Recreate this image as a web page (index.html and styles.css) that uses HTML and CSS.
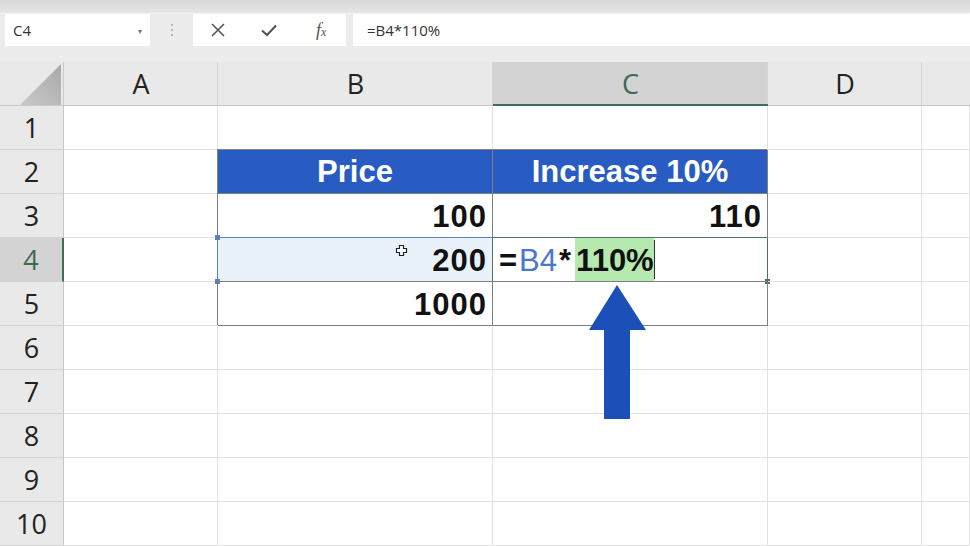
FILE: index.html
```html
<!DOCTYPE html>
<html>
<head>
<meta charset="utf-8">
<link rel="stylesheet" href="styles.css">
</head>
<body>
<div class="top">
  <div class="namebox"><span>C4</span><span class="dd">&#9662;</span></div>
  <div class="sep"><i></i><i></i><i></i></div>
  <div class="fxbox">
    <svg class="ico" width="16" height="16" viewBox="0 0 16 16"><path d="M2 2 L14 14 M14 2 L2 14" stroke="#555" stroke-width="1.6" fill="none"/></svg>
    <svg class="ico" width="18" height="16" viewBox="0 0 18 16"><path d="M2 8.5 L7 13 L16 3.5" stroke="#555" stroke-width="2" fill="none"/></svg>
    <span class="fx">f<small>x</small></span>
  </div>
  <div class="formula">=B4*110%</div>
</div>
<div class="sheet">
  <div class="corner"><svg width="42" height="42" viewBox="0 0 42 42"><defs><linearGradient id="g" x1="0" y1="1" x2="1" y2="0"><stop offset="0" stop-color="#c9c9c9"/><stop offset="1" stop-color="#a9a9a9"/></linearGradient></defs><polygon points="0,42 41,42 41,1" fill="url(#g)"/></svg></div>
  <div class="ch">A</div><div class="ch">B</div><div class="ch sel">C</div><div class="ch">D</div><div class="ch last"></div>

  <div class="rh">1</div><div class="c"></div><div class="c"></div><div class="c"></div><div class="c"></div><div class="c"></div>
  <div class="rh">2</div><div class="c"></div><div class="c t th">Price</div><div class="c t th">Increase 10%</div><div class="c"></div><div class="c"></div>
  <div class="rh">3</div><div class="c"></div><div class="c t num">100</div><div class="c t num">110</div><div class="c"></div><div class="c"></div>
  <div class="rh rsel">4</div><div class="c"></div>
  <div class="c t num ref">200<svg class="cursor" width="13" height="13" viewBox="0 0 13 13"><path d="M4.5 1.5 H8.5 V4.5 H11.5 V8.5 H8.5 V11.5 H4.5 V8.5 H1.5 V4.5 H4.5 Z" fill="#fff" stroke="#222" stroke-width="1.2"/></svg><b class="h h1"></b><b class="h h2"></b></div>
  <div class="c t edit"><span>=</span><span class="blue">B4</span><span>*</span><span class="hl">110%</span><span class="caret"></span><b class="h h3"></b></div>
  <div class="c"></div><div class="c"></div>
  <div class="rh">5</div><div class="c"></div><div class="c t num">1000</div><div class="c t"></div><div class="c"></div><div class="c"></div>
  <div class="rh">6</div><div class="c"></div><div class="c"></div><div class="c"></div><div class="c"></div><div class="c"></div>
  <div class="rh">7</div><div class="c"></div><div class="c"></div><div class="c"></div><div class="c"></div><div class="c"></div>
  <div class="rh">8</div><div class="c"></div><div class="c"></div><div class="c"></div><div class="c"></div><div class="c"></div>
  <div class="rh">9</div><div class="c"></div><div class="c"></div><div class="c"></div><div class="c"></div><div class="c"></div>
  <div class="rh">10</div><div class="c"></div><div class="c"></div><div class="c"></div><div class="c"></div><div class="c"></div>

  <svg class="arrow" width="60" height="136" viewBox="0 0 60 136"><polygon points="29,0 58,45 42,45 42,134 16,134 16,45 1,45" fill="#1c4fb8"/></svg>
</div>
</body>
</html>
```

FILE: styles.css
```css
body {
  margin: 0;
  width: 970px;
  height: 546px;
  overflow: hidden;
  background: #fff;
  font-family: "Open Sans", "DejaVu Sans", sans-serif;
  color: #222;
}

.top {
  height: 62px;
  box-sizing: border-box;
  padding: 14px 0 0 5px;
  display: flex;
  align-items: flex-start;
  background: linear-gradient(#d9d9d9 0, #e4e4e4 12px, #f2f2f2 13px, #ececec 14px, #ececec 100%);
}

.namebox {
  width: 145px;
  height: 32px;
  box-sizing: border-box;
  background: #fff;
  display: flex;
  align-items: center;
  justify-content: space-between;
  padding: 0 8px 0 8px;
  font-size: 15px;
  color: #333;
}

.dd {
  font-size: 8px;
  color: #777;
}

.sep {
  width: 43px;
  height: 32px;
  display: flex;
  flex-direction: column;
  align-items: center;
  justify-content: center;
  gap: 3px;
}

.sep i {
  width: 2px;
  height: 2px;
  background: #b5b5b5;
}

.fxbox {
  width: 153px;
  height: 32px;
  background: #fff;
  display: flex;
  align-items: center;
  box-sizing: border-box;
  padding: 0 0 0 17px;
  gap: 34px;
}

.fx {
  font-family: "Liberation Serif", serif;
  font-style: italic;
  font-size: 18px;
  color: #555;
  margin-left: 4px;
}

.fx small {
  font-size: 12px;
}

.formula {
  flex: 1;
  height: 32px;
  margin-left: 7px;
  background: #fff;
  display: flex;
  align-items: center;
  padding-left: 14px;
  font-size: 15px;
  color: #333;
}

.sheet {
  position: relative;
  display: grid;
  grid-template-columns: 64px 154px 275px 275px 154px 48px;
  grid-template-rows: 44px repeat(10, 44px);
}

.corner {
  background: #e9e9e9;
  border-right: 1px solid #c9c9c9;
  border-bottom: 1px solid #c9c9c9;
  box-sizing: border-box;
  display: flex;
  align-items: flex-end;
  justify-content: flex-end;
  padding: 0 1px 0 0;
}

.corner svg {
  display: block;
}

.ch {
  background: #e9e9e9;
  border-bottom: 1px solid #c6c6c6;
  box-shadow: inset -1px 0 0 #d5d5d5;
  box-sizing: border-box;
  display: flex;
  align-items: center;
  justify-content: center;
  font-size: 27px;
  color: #222;
}

.ch.sel {
  background: #d3d3d3;
  border-bottom: 2px solid #3f6f55;
  color: #3a6a50;
}

.ch.last {
  box-shadow: none;
}

.rh {
  background: #e9e9e9;
  border-right: 1px solid #c6c6c6;
  border-bottom: 1px solid #d3d3d3;
  box-sizing: border-box;
  display: flex;
  align-items: center;
  justify-content: center;
  font-size: 27px;
  color: #222;
}

.rh.rsel {
  background: #d3d3d3;
  border-right: 2px solid #3f6f55;
  color: #3a6a50;
}

.c {
  position: relative;
  border-right: 1px solid #e2e2e2;
  border-bottom: 1px solid #e2e2e2;
  box-sizing: border-box;
  font-family: "Liberation Sans", Arial, sans-serif;
  font-weight: bold;
  font-size: 31px;
  color: #111;
}

.c.t {
  border-right: 1px solid #808080;
  border-bottom: 1px solid #808080;
  box-shadow: -1px -1px 0 #808080;
}

.c.th {
  background: #285cc2;
  color: #fff;
  display: flex;
  align-items: center;
  justify-content: center;
  padding-top: 1px;
}

.c.num {
  display: flex;
  align-items: center;
  justify-content: flex-end;
  padding: 3px 5px 0 0;
  letter-spacing: 1px;
}

.c.ref {
  background: #e9f1fb;
  border-right: 1px solid #5f7fb8;
  border-bottom: 1px solid #5f7fb8;
  box-shadow: -1px -1px 0 #5f7fb8;
}

.c.edit {
  background: #fff;
  display: flex;
  align-items: stretch;
  padding-left: 6px;
  border-right: 1px solid #4e7360;
  border-bottom: 1px solid #4e7360;
  box-shadow: -1px -1px 0 #4e7360;
}

.edit span {
  display: flex;
  align-items: center;
  padding-top: 3px;
}

.edit .blue {
  color: #4a78c8;
  font-weight: normal;
  margin: 0 2px 0 2px;
}

.edit .hl {
  background: #b6e9b0;
  margin-left: 4px;
  padding-left: 1px;
}

.edit .caret {
  width: 1px;
  background: #333;
  margin: 2px 0;
  padding: 0;
}

.h {
  position: absolute;
  width: 5px;
  height: 5px;
  background: #5f7fb8;
}

.h1 {
  left: -3px;
  top: -3px;
}

.h2 {
  left: -3px;
  bottom: -3px;
}

.h3 {
  right: -3px;
  bottom: -3px;
  background: #4e7360;
}

.cursor {
  position: absolute;
  left: 177px;
  top: 6px;
}

.arrow {
  position: absolute;
  left: 588px;
  top: 223px;
}
```
